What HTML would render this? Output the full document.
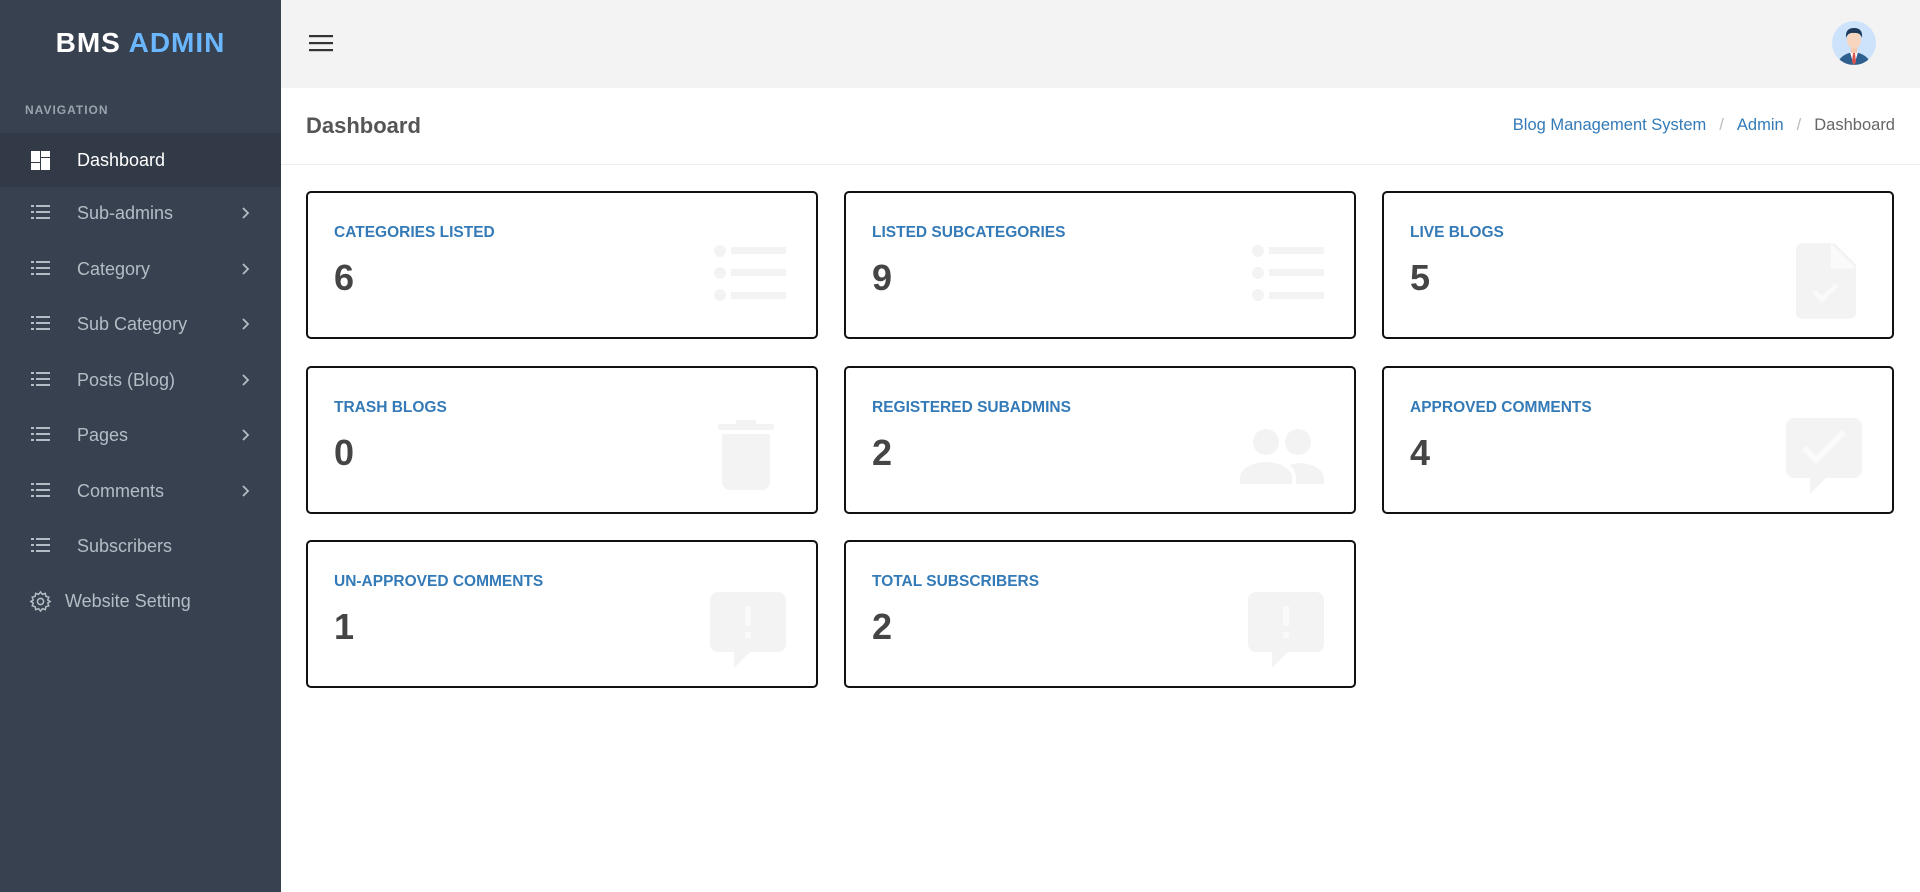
<!DOCTYPE html>
<html><head><meta charset="utf-8"><style>
*{box-sizing:border-box;margin:0;padding:0}
body{width:1920px;height:892px;overflow:hidden;font-family:"Liberation Sans",sans-serif;background:#fff;position:relative}
.sb{position:absolute;left:0;top:0;width:281px;height:892px;background:#38414f}
.logo{position:absolute;top:27px;left:0;width:281px;text-align:center;font-size:28px;font-weight:bold;color:#fff;letter-spacing:1px}
.logo span{color:#6ab7ff}
.navl{position:absolute;left:25px;top:103px;font-size:12px;font-weight:bold;color:#9aa3ad;letter-spacing:1px}
.item{position:absolute;left:0;width:281px;height:54px;color:#b4bcc6;font-size:18px;display:flex;align-items:center}
.item.act{background:#323a47;color:#fff}
.item .ic{position:absolute;left:31px;top:18px}
.item .tx{position:absolute;left:77px}
.item .ch{position:absolute;left:242px;top:20px}
.top{position:absolute;left:281px;top:0;width:1639px;height:88px;background:#f3f3f3}
.tb{position:absolute;left:281px;top:88px;width:1639px;height:77px;border-bottom:1px solid #eee;background:#fff}
.tb h1{position:absolute;left:25px;top:25px;font-size:22px;font-weight:bold;color:#555}
.bc{position:absolute;right:25px;top:28px;font-size:16.5px;color:#337ab7}
.bc .s{color:#bbb;margin:0 13px}.bc .g{color:#666}
.card{position:absolute;width:512px;height:148px;border:2px solid #111;border-radius:5px;background:#fff}
.card .t{position:absolute;left:26px;top:31px;font-size:15.5px;font-weight:bold;color:#337ab7}
.card .n{position:absolute;left:26px;top:64px;font-size:36px;font-weight:bold;color:#454545}
.card svg{position:absolute;right:30px;top:52px}
</style></head><body>
<div class="sb">
<div class="logo">BMS <span>ADMIN</span></div>
<div class="navl">NAVIGATION</div>
<div class="item act" style="top:133px"><svg class="ic" width="19" height="19" viewBox="0 0 19 19" fill="#fff"><rect x="0" y="0" width="9" height="11"/><rect x="10" y="0" width="9" height="6"/><rect x="0" y="12" width="9" height="7"/><rect x="10" y="7" width="9" height="12"/></svg><span class="tx">Dashboard</span></div>
<div class="item" style="top:186px"><svg class="ic" width="19" height="16" fill="#b4bcc6"><rect x="0" y="1" width="3" height="2"/><rect x="5" y="1" width="14" height="2"/><rect x="0" y="7" width="3" height="2"/><rect x="5" y="7" width="14" height="2"/><rect x="0" y="13" width="3" height="2"/><rect x="5" y="13" width="14" height="2"/></svg><span class="tx">Sub-admins</span><svg class="ch" width="8" height="14"><path d="M1 2l5 5-5 5" stroke="#b4bcc6" stroke-width="1.8" fill="none"/></svg></div>
<div class="item" style="top:242px"><svg class="ic" width="19" height="16" fill="#b4bcc6"><rect x="0" y="1" width="3" height="2"/><rect x="5" y="1" width="14" height="2"/><rect x="0" y="7" width="3" height="2"/><rect x="5" y="7" width="14" height="2"/><rect x="0" y="13" width="3" height="2"/><rect x="5" y="13" width="14" height="2"/></svg><span class="tx">Category</span><svg class="ch" width="8" height="14"><path d="M1 2l5 5-5 5" stroke="#b4bcc6" stroke-width="1.8" fill="none"/></svg></div>
<div class="item" style="top:297px"><svg class="ic" width="19" height="16" fill="#b4bcc6"><rect x="0" y="1" width="3" height="2"/><rect x="5" y="1" width="14" height="2"/><rect x="0" y="7" width="3" height="2"/><rect x="5" y="7" width="14" height="2"/><rect x="0" y="13" width="3" height="2"/><rect x="5" y="13" width="14" height="2"/></svg><span class="tx">Sub Category</span><svg class="ch" width="8" height="14"><path d="M1 2l5 5-5 5" stroke="#b4bcc6" stroke-width="1.8" fill="none"/></svg></div>
<div class="item" style="top:353px"><svg class="ic" width="19" height="16" fill="#b4bcc6"><rect x="0" y="1" width="3" height="2"/><rect x="5" y="1" width="14" height="2"/><rect x="0" y="7" width="3" height="2"/><rect x="5" y="7" width="14" height="2"/><rect x="0" y="13" width="3" height="2"/><rect x="5" y="13" width="14" height="2"/></svg><span class="tx">Posts (Blog)</span><svg class="ch" width="8" height="14"><path d="M1 2l5 5-5 5" stroke="#b4bcc6" stroke-width="1.8" fill="none"/></svg></div>
<div class="item" style="top:408px"><svg class="ic" width="19" height="16" fill="#b4bcc6"><rect x="0" y="1" width="3" height="2"/><rect x="5" y="1" width="14" height="2"/><rect x="0" y="7" width="3" height="2"/><rect x="5" y="7" width="14" height="2"/><rect x="0" y="13" width="3" height="2"/><rect x="5" y="13" width="14" height="2"/></svg><span class="tx">Pages</span><svg class="ch" width="8" height="14"><path d="M1 2l5 5-5 5" stroke="#b4bcc6" stroke-width="1.8" fill="none"/></svg></div>
<div class="item" style="top:464px"><svg class="ic" width="19" height="16" fill="#b4bcc6"><rect x="0" y="1" width="3" height="2"/><rect x="5" y="1" width="14" height="2"/><rect x="0" y="7" width="3" height="2"/><rect x="5" y="7" width="14" height="2"/><rect x="0" y="13" width="3" height="2"/><rect x="5" y="13" width="14" height="2"/></svg><span class="tx">Comments</span><svg class="ch" width="8" height="14"><path d="M1 2l5 5-5 5" stroke="#b4bcc6" stroke-width="1.8" fill="none"/></svg></div>
<div class="item" style="top:519px"><svg class="ic" width="19" height="16" fill="#b4bcc6"><rect x="0" y="1" width="3" height="2"/><rect x="5" y="1" width="14" height="2"/><rect x="0" y="7" width="3" height="2"/><rect x="5" y="7" width="14" height="2"/><rect x="0" y="13" width="3" height="2"/><rect x="5" y="13" width="14" height="2"/></svg><span class="tx">Subscribers</span></div>
<div class="item" style="top:574px"><svg style="position:absolute;left:29px;top:16px" width="23" height="23" viewBox="0 0 24 24" fill="none" stroke="#b4bcc6" stroke-width="1.6"><circle cx="12" cy="12" r="3.2"/><path d="M12 2l2 2.5 3-1 .6 3.1 3 .9-1 3 2.4 1.5-2.4 1.5 1 3-3 .9-.6 3.1-3-1L12 22l-2-2.5-3 1-.6-3.1-3-.9 1-3L2 12l2.4-1.5-1-3 3-.9L7 3.5l3 1z"/></svg><span class="tx" style="left:65px">Website Setting</span></div>
</div>
<div class="top">
<svg style="position:absolute;left:28px;top:35px" width="24" height="17"><rect y="0" width="24" height="2.2" fill="#333"/><rect y="7" width="24" height="2.2" fill="#333"/><rect y="14" width="24" height="2.2" fill="#333"/></svg>
<svg style="position:absolute;left:1550px;top:20px" width="46" height="46" viewBox="0 0 46 46"><circle cx="23" cy="23" r="22" fill="#cde3fb"/><clipPath id="c"><circle cx="23" cy="23" r="22"/></clipPath><g clip-path="url(#c)"><path d="M6 46 Q8 34 23 32 Q38 34 40 46z" fill="#2f5f8e"/><path d="M19 32h8l-4 14z" fill="#fff"/><path d="M22 33h2l1 9-2 3-2-3z" fill="#d9534f"/><rect x="20" y="26" width="6" height="7" fill="#f4c9b0"/><ellipse cx="23" cy="20" rx="7" ry="8.5" fill="#f7d5bf"/><path d="M15 18 Q14 8 23 8 Q32 8 31 18 Q29 12 23 13 Q17 12 15 18z" fill="#1f3a5a"/></g></svg>
</div>
<div class="tb"><h1>Dashboard</h1><div class="bc">Blog Management System<span class="s">/</span>Admin<span class="s">/</span><span class="g">Dashboard</span></div></div>

<div class="card" style="left:306px;top:191px"><div class="t">CATEGORIES LISTED</div><div class="n">6</div>
<svg width="72" height="60" viewBox="0 0 72 60" fill="#f3f3f3"><circle cx="6" cy="6" r="6"/><rect x="17" y="2" width="55" height="7"/><circle cx="6" cy="28" r="6"/><rect x="17" y="24" width="55" height="7"/><circle cx="6" cy="50" r="6"/><rect x="17" y="47" width="55" height="7"/></svg></div>
<div class="card" style="left:844px;top:191px"><div class="t">LISTED SUBCATEGORIES</div><div class="n">9</div>
<svg width="72" height="60" viewBox="0 0 72 60" fill="#f3f3f3"><circle cx="6" cy="6" r="6"/><rect x="17" y="2" width="55" height="7"/><circle cx="6" cy="28" r="6"/><rect x="17" y="24" width="55" height="7"/><circle cx="6" cy="50" r="6"/><rect x="17" y="47" width="55" height="7"/></svg></div>
<div class="card" style="left:1382px;top:191px"><div class="t">LIVE BLOGS</div><div class="n">5</div>
<svg style="top:50px;right:36px" width="60" height="76" viewBox="0 0 62 78" fill="#f3f3f3"><path d="M6 0h34l22 22v50a6 6 0 0 1-6 6H6a6 6 0 0 1-6-6V6a6 6 0 0 1 6-6z"/><path d="M36 0v26h26" fill="#fafafa"/><path d="M19 50l8 8 15-15" stroke="#fafafa" stroke-width="5" fill="none"/></svg></div>

<div class="card" style="left:306px;top:366px"><div class="t">TRASH BLOGS</div><div class="n">0</div>
<svg style="top:52px;right:42px" width="56" height="70" viewBox="0 0 56 70" fill="#f3f3f3"><rect x="0" y="4" width="56" height="6" rx="2"/><rect x="18" y="0" width="20" height="6" rx="2"/><path d="M4 14h48v48a8 8 0 0 1-8 8H12a8 8 0 0 1-8-8z"/></svg></div>
<div class="card" style="left:844px;top:366px"><div class="t">REGISTERED SUBADMINS</div><div class="n">2</div>
<svg style="top:60px" width="84" height="56" viewBox="0 0 84 56" fill="#f3f3f3"><circle cx="26" cy="14" r="13"/><circle cx="58" cy="14" r="13"/><path d="M0 56v-6c0-10 14-16 26-16s26 6 26 16v6z"/><path d="M56 56v-6c0-6-3-10-6-13 3-1 6-2 9-2 12 0 25 6 25 15v6z"/></svg></div>
<div class="card" style="left:1382px;top:366px"><div class="t">APPROVED COMMENTS</div><div class="n">4</div>
<svg style="top:50px;right:30px" width="76" height="76" viewBox="0 0 76 76" fill="#f3f3f3"><path d="M8 0h60a8 8 0 0 1 8 8v44a8 8 0 0 1-8 8H40L24 76V60H8a8 8 0 0 1-8-8V8a8 8 0 0 1 8-8z"/><path d="M18 30l12 12 28-28" stroke="#fafafa" stroke-width="6" fill="none"/></svg></div>

<div class="card" style="left:306px;top:540px"><div class="t">UN-APPROVED COMMENTS</div><div class="n">1</div>
<svg style="top:50px;right:30px" width="76" height="76" viewBox="0 0 76 76" fill="#f3f3f3"><path d="M8 0h60a8 8 0 0 1 8 8v44a8 8 0 0 1-8 8H40L24 76V60H8a8 8 0 0 1-8-8V8a8 8 0 0 1 8-8z"/><rect x="35" y="14" width="6" height="20" fill="#fafafa"/><rect x="35" y="40" width="6" height="6" fill="#fafafa"/></svg></div>
<div class="card" style="left:844px;top:540px"><div class="t">TOTAL SUBSCRIBERS</div><div class="n">2</div>
<svg style="top:50px;right:30px" width="76" height="76" viewBox="0 0 76 76" fill="#f3f3f3"><path d="M8 0h60a8 8 0 0 1 8 8v44a8 8 0 0 1-8 8H40L24 76V60H8a8 8 0 0 1-8-8V8a8 8 0 0 1 8-8z"/><rect x="35" y="14" width="6" height="20" fill="#fafafa"/><rect x="35" y="40" width="6" height="6" fill="#fafafa"/></svg></div>
</body></html>
